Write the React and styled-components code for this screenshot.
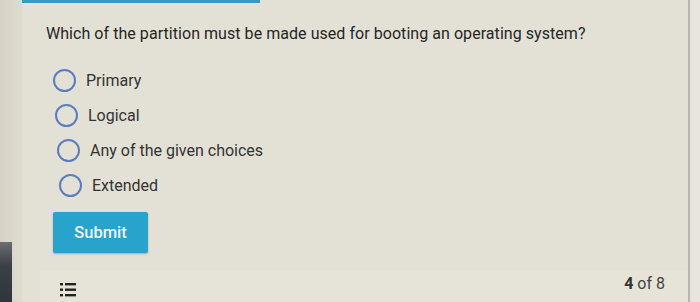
import React from 'react';
import styled, { createGlobalStyle } from 'styled-components';

const Global = createGlobalStyle`
  html, body { margin: 0; padding: 0; }
  body { font-family: Roboto, "Liberation Sans", sans-serif; background: #e2e0d4; }
`;

const Screen = styled.div`
  width: 700px;
  height: 302px;
  display: flex;
  overflow: hidden;
  background: #e3e1d5;
`;

const LeftEdge = styled.div`
  width: 22px;
  display: flex;
  flex-direction: column;
  background: linear-gradient(90deg, #d6d2c6 0%, #dedbcf 100%);
`;

const Bezel = styled.div`
  margin-top: auto;
  height: 60px;
  width: 12px;
  background: linear-gradient(180deg, #6b6d70 0%, #3b3f46 40%, #30343b 100%);
`;

const Main = styled.div`
  flex: 1;
  display: flex;
  flex-direction: column;
`;

const Progress = styled.div`
  height: 3px;
`;

const ProgressFill = styled.div`
  height: 100%;
  background: #3d98bf;
`;

const Content = styled.div`
  padding-left: 24px;
  flex: 1;
  display: flex;
  flex-direction: column;
`;

const Question = styled.div`
  margin-top: 21px;
  font-size: 16px;
  line-height: 20px;
  color: #262626;
  letter-spacing: 0.05px;
`;

const Options = styled.div`
  margin-top: 19px;
  display: flex;
  flex-direction: column;
`;

const Option = styled.label`
  height: 35px;
  display: flex;
  align-items: center;
  gap: 10px;
  margin-left: ${p => 7 + p.$shift}px;
  font-size: 16px;
  color: #333;
`;

const Radio = styled.span`
  width: 19px;
  height: 19px;
  border: 2px solid #5b7dbf;
  border-radius: 50%;
  flex-shrink: 0;
`;

const SubmitButton = styled.button`
  margin: 9px 0 0 7px;
  width: 95px;
  height: 41px;
  border: none;
  border-radius: 2px;
  background: #27a3cc;
  color: #eef7fa;
  font-family: Roboto, "Liberation Sans", sans-serif;
  font-size: 16.5px;
  font-weight: 500;
  box-shadow: 0 1px 2px rgba(0, 0, 0, 0.25);
`;

const Footer = styled.div`
  margin-top: auto;
  margin-left: 18px;
  height: 32px;
  display: flex;
  align-items: center;
  justify-content: space-between;
  padding: 0 23px 0 20px;
  background: #e6e4d9;
`;

const ListIcon = styled.svg`
  margin-top: 8px;
`;

const Counter = styled.div`
  font-size: 16px;
  color: #444;
  margin-top: -6px;
  b { font-weight: 700; color: #333; }
`;

const RightEdge = styled.div`
  width: 10px;
  border-left: 2px solid #b9b8ae;
  background: #e8e6dc;
`;

const options = ['Primary', 'Logical', 'Any of the given choices', 'Extended'];

export default function App() {
  return (
    <>
      <Global />
      <Screen>
        <LeftEdge>
          <Bezel />
        </LeftEdge>
        <Main>
          <Progress>
            <ProgressFill style={{ width: 238 }} />
          </Progress>
          <Content>
            <Question>Which of the partition must be made used for booting an operating system?</Question>
            <Options>
              {options.map((o, i) => (
                <Option key={o} $shift={i * 2}>
                  <Radio />
                  {o}
                </Option>
              ))}
            </Options>
            <div>
              <SubmitButton>Submit</SubmitButton>
            </div>
          </Content>
          <Footer>
            <ListIcon width="16" height="14" viewBox="0 0 16 14">
              <g fill="#222">
                <rect x="0" y="0" width="3" height="2.4" />
                <rect x="5" y="0" width="11" height="2.4" />
                <rect x="0" y="5.5" width="3" height="2.4" />
                <rect x="5" y="5.5" width="11" height="2.4" />
                <rect x="0" y="11" width="3" height="2.4" />
                <rect x="5" y="11" width="11" height="2.4" />
              </g>
            </ListIcon>
            <Counter><b>4</b> of 8</Counter>
          </Footer>
        </Main>
        <RightEdge />
      </Screen>
    </>
  );
}
